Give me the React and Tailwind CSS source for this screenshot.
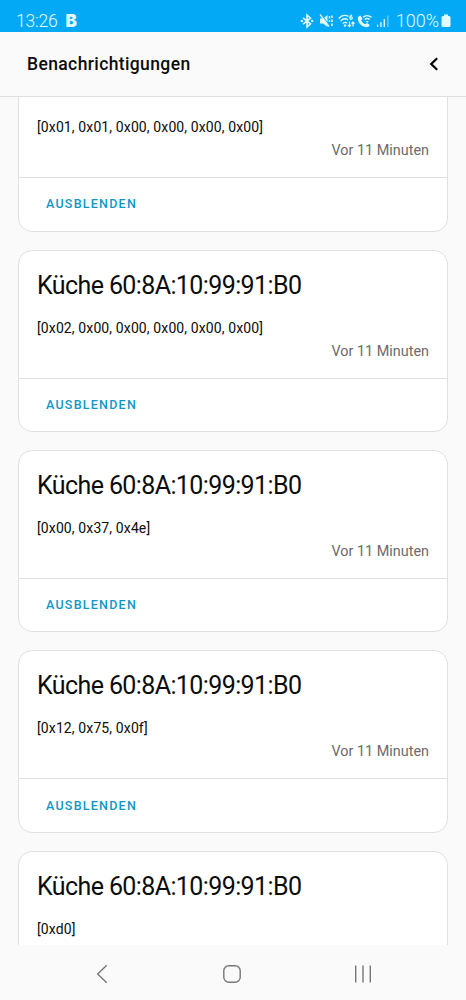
import React from "react";

const notifications = [
  { id: 1, message: "[0x01, 0x01, 0x00, 0x00, 0x00, 0x00]" },
  {
    id: 2,
    title: "Küche 60:8A:10:99:91:B0",
    message: "[0x02, 0x00, 0x00, 0x00, 0x00, 0x00]",
  },
  { id: 3, title: "Küche 60:8A:10:99:91:B0", message: "[0x00, 0x37, 0x4e]" },
  { id: 4, title: "Küche 60:8A:10:99:91:B0", message: "[0x12, 0x75, 0x0f]" },
  { id: 5, title: "Küche 60:8A:10:99:91:B0", message: "[0xd0]", partial: true },
];

function StatusBar() {
  return (
    <div className="h-8 shrink-0 flex items-center bg-[#03a9f4] text-[#e2fbff] pl-4 pr-[15px] pt-[9px]">
      <span className="text-[17.500px] leading-6 tracking-[-0.200px] font-light">13:26</span>
      <span className="ml-[8px] text-[17px] leading-6 font-black font-['Inter',sans-serif]">
        B
      </span>
      <div className="ml-auto flex items-center">
        {/* bluetooth */}
        <svg width="14" height="16" viewBox="0 0 14 16" fill="none" stroke="currentColor" strokeWidth="1.6">
          <path d="M3 4.8l7.500 6L7 14V2l3.500 3.200L3 11.200" />
          <path d="M.8 8h2.200M11 8h2.200" strokeWidth="2" />
        </svg>
        {/* muted, vibrating */}
        <svg className="ml-[5px]" width="15" height="16" viewBox="0 0 15 16" fill="none" stroke="currentColor">
          <path d="M1 5.500h3L8.500 2v12L4 10.500H1z" fill="currentColor" stroke="none" />
          <path d="M2 1.500l9 12" stroke="#03a9f4" strokeWidth="1.300" />
          <path d="M1 1.500l9 12" strokeWidth="1.300" />
          <path d="M10.500 3v2.500M10.500 7v2M13 2.500V5M13 6.500V9M13 10.500V13" strokeWidth="1.500" />
        </svg>
        {/* wifi 6 */}
        <svg className="ml-[3px]" width="18" height="16" viewBox="0 0 18 16" fill="none" stroke="currentColor" strokeWidth="1.4">
          <path d="M1.700 5.500C4.200 2.500 8 1.700 11.500 3.300M3.700 8c2-2.300 5-2.700 7.500-1M5.800 10.500c1.200-1.400 3-1.500 4.300-.3" />
          <path d="M6.500 12.500L8 11l1.600 1.500L8 14.200z" fill="currentColor" stroke="none" />
          <path d="M15 1.800c-1.700.5-2.300 1.600-2.300 3M14.100 3.800a1.200 1.200 0 1 1 0 2.400 1.200 1.200 0 0 1 0-2.400" strokeWidth="1.200" />
          <path d="M12.500 8.500v5M11 12l1.500 1.700L14 12M16 13.500V9M14.500 10.500L16 9l1.500 1.500" strokeWidth="1.200" />
        </svg>
        {/* wifi calling */}
        <svg className="ml-[2px]" width="16" height="16" viewBox="0 0 16 16" fill="none" stroke="currentColor">
          <path d="M3.300 2.500l2.200 3-1.300 1.700c.8 2 2 3.200 4 4l1.800-1.300 2.800 2.200c-.8 1.700-2 2.400-3.800 2.200C4.500 13.600 1 10 .8 5.800.7 4.300 1.700 3 3.300 2.500z" fill="currentColor" stroke="none" />
          <path d="M6 4.300c2.300-2.300 6-2.300 8.500 0M7.800 6.600c1.400-1.400 3.400-1.400 4.800 0" strokeWidth="1.400" />
          <path d="M8.700 8h3l-1.500 2z" fill="currentColor" stroke="none" />
        </svg>
        {/* signal */}
        <svg className="ml-[4px]" width="13" height="16" viewBox="0 0 13 16" fill="currentColor">
          <path d="M0 11.500h1.200V14H0zM3.300 9h1.300v5H3.300zM6.600 6H8v8H6.600z" />
          <path d="M10.200 2.500h1.300V14h-1.300z" opacity="0.5" />
        </svg>
        <span className="ml-[6px] text-[18px] leading-6 font-light">100%</span>
        {/* battery */}
        <svg className="ml-[2px]" width="10" height="16" viewBox="0 0 10 16" fill="currentColor">
          <path d="M3 1.500h4V3h1a1.500 1.500 0 0 1 1.500 1.500v8A1.500 1.500 0 0 1 8 14H2a1.500 1.500 0 0 1-1.500-1.500v-8A1.500 1.500 0 0 1 2 3h1z" />
        </svg>
      </div>
    </div>
  );
}

function Header() {
  return (
    <header className="h-[65px] shrink-0 flex items-center justify-between border-b border-[#dedede] pl-[27px] pr-[26px]">
      <h1 className="text-[17.500px] leading-6 font-medium tracking-[0.380px] text-[#0c0c0c]">
        Benachrichtigungen
      </h1>
      <svg width="12" height="16" viewBox="0 0 12 16" fill="none" stroke="#000" strokeWidth="2.2">
        <path d="M9.200 2.200L3.200 8l6 5.800" />
      </svg>
    </header>
  );
}

function NotificationCard({ title, message, partial }) {
  return (
    <div className="h-[182.400px] shrink-0 flex flex-col rounded-[14px] border border-[#e0e0e0] bg-white">
      <div className="h-[128px] shrink-0 flex flex-col justify-end px-[18px] pb-[14px] border-b border-[#e0e0e0]">
        {title && (
          <h2 className="mb-[12px] text-[25px] leading-9 tracking-[-0.600px] text-[#0c0c0c]">
            {title}
          </h2>
        )}
        <p className="text-[14px] leading-6 tracking-[0.120px] text-[#0c0c0c]">{message}</p>
        <p className="h-6 text-right text-[14.400px] leading-6 text-[#6c6c6c]">
          {!partial && "Vor 11 Minuten"}
        </p>
      </div>
      {!partial && (
        <div className="flex-1 flex items-center px-[27px]">
          <button className="text-[12.500px] leading-5 font-medium tracking-[1.240px] text-[#0d97c9]">
            AUSBLENDEN
          </button>
        </div>
      )}
    </div>
  );
}

function NavBar() {
  return (
    <nav className="h-[55px] shrink-0 flex items-center justify-between pl-[91px] pr-[93px] pt-[3px] text-[#777]">
      <svg width="20" height="20" viewBox="0 0 20 20" fill="none" stroke="currentColor" strokeWidth="1.400">
        <path d="M15.700 1.200L6.700 10l9 8.800" />
      </svg>
      <svg width="20" height="20" viewBox="0 0 20 20" fill="none" stroke="currentColor" strokeWidth="1.400">
        <rect x="1.800" y="1.800" width="16.400" height="16.400" rx="5" />
      </svg>
      <svg width="20" height="20" viewBox="0 0 20 20" fill="none" stroke="currentColor" strokeWidth="1.400">
        <path d="M2.700 1.500v17M10 1.500v17M17.300 1.500v17" />
      </svg>
    </nav>
  );
}

export default function App() {
  return (
    <div className="w-[466px] h-[1000px] flex flex-col overflow-hidden bg-[#fafafa] font-['Roboto',sans-serif]">
      <StatusBar />
      <Header />
      <main className="flex-1 min-h-0 overflow-hidden px-[18px]">
        <div className="-mt-[47.800px] flex flex-col gap-[18px]">
          {notifications.map((n) => (
            <NotificationCard key={n.id} {...n} />
          ))}
        </div>
      </main>
      <NavBar />
    </div>
  );
}
